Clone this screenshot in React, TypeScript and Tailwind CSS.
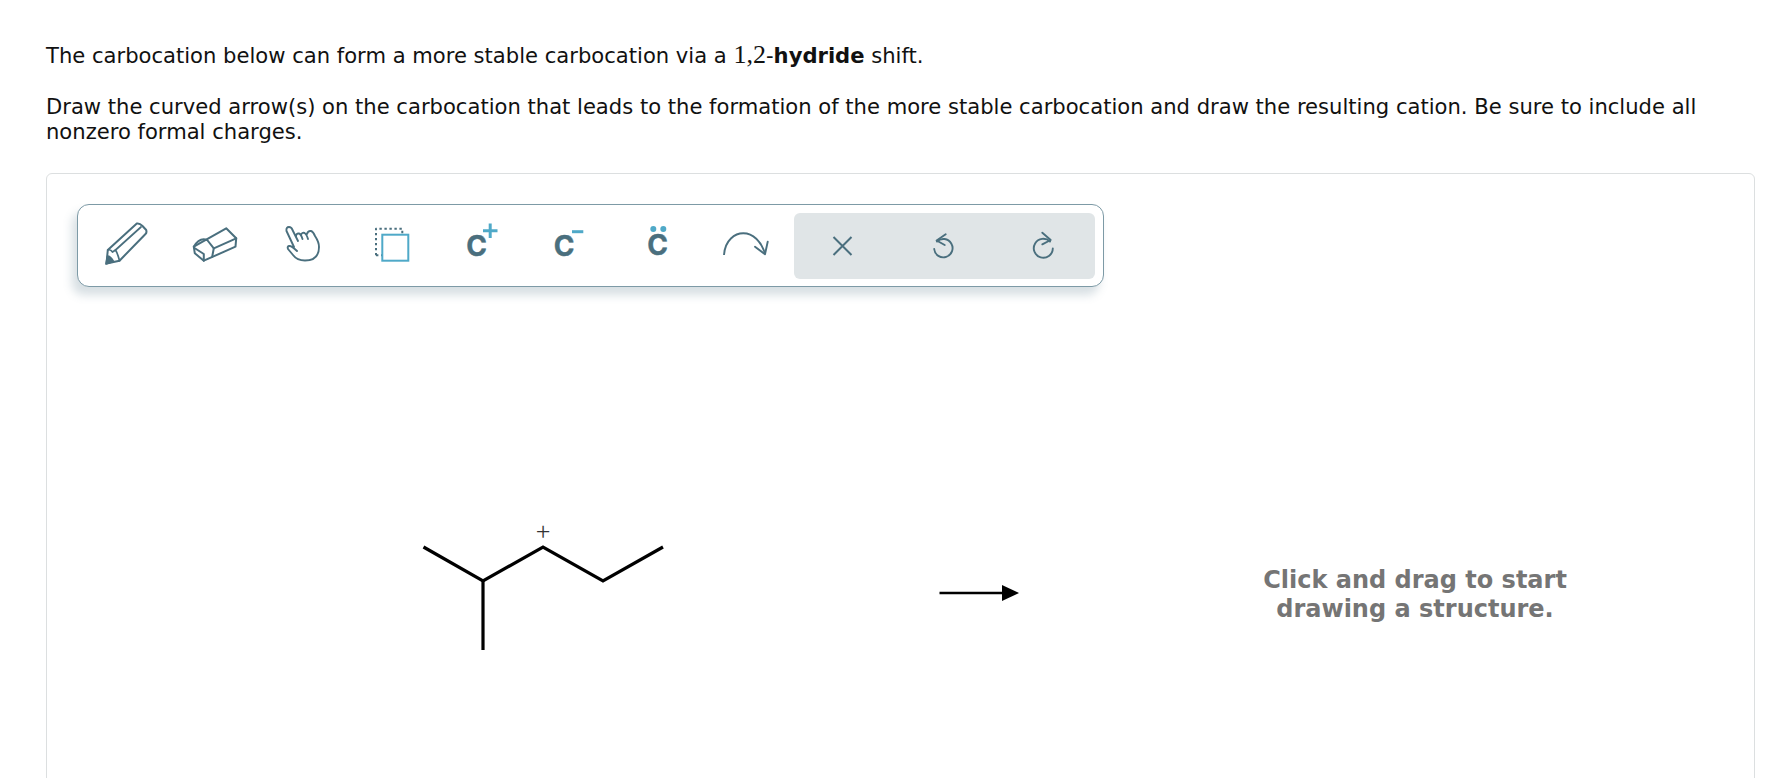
import React from "react";

const ink = "#4a6f7e";
const blue = "#4fa9c8";

function ToolIcon({ children }: { children: React.ReactNode }) {
  return (
    <svg width="48" height="48" viewBox="0 0 48 48" fill="none" stroke={ink} strokeWidth="1.7" strokeLinejoin="round" strokeLinecap="round" className="overflow-visible">
      {children}
    </svg>
  );
}

function CarbonLetter() {
  return (
    <text x="0" y="0" fill={ink} stroke={ink} strokeWidth="0.4" fontFamily="Inter, sans-serif" fontWeight="700" fontSize="28" textAnchor="middle">
      C
    </text>
  );
}

const tools = [
  <ToolIcon key="pencil">
    <g transform="translate(1.5 0)">
      <path d="M5.3 28 L34.3 1.6 Q37 1 40 4 L43.7 8 Q44.5 10.5 43 12 L17 38.7 L4 41.5 Z" strokeWidth="2" />
      <path d="M5.3 28 Q8 27 10 30 L13 28 Q15 31 17 38.7" />
      <path d="M13 28 L38.5 5" />
      <path d="M3.5 42 L5 34 Q8 34 11 39.5 Z" fill={ink} />
    </g>
  </ToolIcon>,
  <ToolIcon key="eraser">
    <g transform="translate(1.5 0)">
      <path d="M2.3 24.7 L34.7 6.3 L44.7 16.3 L44 24.7 L12.3 38.7 L3.3 31.3 Z" strokeWidth="2" />
      <path d="M15.7 18 L22.3 26.3 L44.7 16.3" strokeWidth="2" />
      <path d="M2.3 24.7 Q8 15 15.7 18" strokeWidth="2" />
      <path d="M22.3 26.3 L20.7 34.7" strokeWidth="2" />
      <path d="M3 26 L12.3 32 L12.3 38.7" strokeWidth="2" />
    </g>
  </ToolIcon>,
  <ToolIcon key="hand">
    <path
      d="M15 25 L7.5 9 Q7 5 10 5 Q12.5 5 13.5 8 L19 19 M17 15 Q17 11 20 11.5 Q22 12 23.5 17 M22 13 Q23 10 25.5 11 Q27.5 12 29 17 M28 12 Q29 8.5 32 9 Q34 9.5 36 14 Q40 20 40 25 Q40 38.5 26 38.5 Q18 38.5 14 33 L9 27 Q8 24.5 10 24 Q12.5 23.5 18 29"
      strokeWidth="1.9"
    />
  </ToolIcon>,
  <ToolIcon key="select">
    <g transform="translate(1 0)">
      <path d="M7 33.3 L7 6.7 L33.3 6.7 L33.3 12 M7 33.3 L13 33.3" strokeDasharray="2.4 2.6" strokeLinecap="butt" strokeWidth="2" />
      <rect x="13.3" y="12.7" width="26" height="26" stroke={blue} strokeWidth="2" strokeLinejoin="miter" />
    </g>
  </ToolIcon>,
  <ToolIcon key="cation">
    <g transform="translate(19.5 33.5)">
      <CarbonLetter />
    </g>
    <path d="M33.2 1.5 L33.2 16 M26 8.7 L40.5 8.7" stroke={blue} strokeWidth="3" strokeLinecap="butt" />
  </ToolIcon>,
  <ToolIcon key="anion">
    <g transform="translate(18 33.5)">
      <CarbonLetter />
    </g>
    <path d="M26 9.7 L37.3 9.7" stroke={blue} strokeWidth="3" strokeLinecap="butt" />
  </ToolIcon>,
  <ToolIcon key="lone-pair">
    <g transform="translate(22.5 32.5)">
      <CarbonLetter />
    </g>
    <circle cx="18.3" cy="7" r="3" fill={blue} stroke="none" />
    <circle cx="28.3" cy="7" r="3" fill={blue} stroke="none" />
  </ToolIcon>,
  <ToolIcon key="arrow">
    <g transform="translate(-3 0)">
      <path d="M3 33 C4 18 14 11.3 22.3 11.3 C32 11.3 40 19 44 31.5" strokeWidth="1.9" strokeLinecap="butt" />
      <path d="M46.7 19.7 L44 32.3 L34 24.7" strokeWidth="1.9" />
    </g>
  </ToolIcon>,
];

const actions = [
  <ToolIcon key="clear">
    <g transform="translate(-1.5 0)">
      <path d="M15 15 L33 33 M33 15 L15 33" strokeWidth="2" strokeLinecap="butt" />
    </g>
  </ToolIcon>,
  <ToolIcon key="undo">
    <path d="M17 19.5 A9.2 9.2 0 1 1 14.2 27" strokeWidth="1.9" />
    <path d="M25.7 12.3 L16.6 18.5 L24.7 23" strokeWidth="1.9" />
  </ToolIcon>,
  <ToolIcon key="redo">
    <g transform="translate(-2 0)">
      <path d="M31 19.5 A9.5 9.5 0 1 0 33.8 26.5" strokeWidth="1.9" />
      <path d="M23.3 10.7 L31.7 18 L23.3 22.3" strokeWidth="1.9" />
    </g>
  </ToolIcon>,
];

export default function App() {
  return (
    <div className="h-screen overflow-hidden bg-white pt-[42px] pl-[46px] pr-[11px] font-['DejaVu_Sans',sans-serif] text-[21.1px] leading-[25px] text-[#111]">
      <p className="mb-[26px]">
        The carbocation below can form a more stable carbocation via a{" "}
        <span className="font-['Liberation_Serif',serif] text-[26px]">1,2</span>-<b>hydride</b> shift.
      </p>
      <p className="mb-[29px] max-w-[1670px]">
        Draw the curved arrow(s) on the carbocation that leads to the formation of the more stable carbocation and draw the resulting cation. Be sure to include all nonzero formal charges.
      </p>

      <div className="h-[700px] rounded-t-[6px] border border-[#dcdfe0] pt-[30px]">
        <div className="ml-[30px] flex h-[83px] w-[1027px] items-center justify-between rounded-[12px] border border-[#7d9aa6] bg-white pr-[8px] pl-[2.5px] shadow-[-5px_8px_10px_rgba(74,111,126,0.22)]">
          <div className="flex">
            {tools.map((icon, i) => (
              <div key={i} className="flex h-[65px] w-[89px] items-center justify-center">
                {icon}
              </div>
            ))}
          </div>
          <div className="flex h-[66px] w-[301px] rounded-[6px] bg-[#e0e5e7]">
            {actions.map((icon, i) => (
              <div key={i} className="flex flex-1 items-center justify-center">
                {icon}
              </div>
            ))}
          </div>
        </div>

        <div className="flex items-start pl-[373px]">
          <svg width="246" height="170" viewBox="420 490 246 170" className="mt-[203px] shrink-0" fill="none" stroke="#000" strokeWidth="3.2">
            <path d="M423.5 547 L483 581 L543 547 L603 581 L663 547" />
            <path d="M483 581 L483 650" />
            <text x="543" y="539.5" fill="#333" stroke="none" fontFamily="'Liberation Serif', serif" fontSize="26" textAnchor="middle">+</text>
          </svg>
          <svg width="90" height="20" viewBox="0 0 90 20" className="mt-[296px] ml-[269px] shrink-0">
            <path d="M4.5 10 L68 10" stroke="#000" strokeWidth="2.5" />
            <path d="M67 2 L84 10 L67 18 Z" fill="#000" />
          </svg>
          <div className="mt-[279px] ml-[220px] w-[340px] shrink-0 text-center text-[24px] leading-[29px] font-bold text-[#757575]">
            Click and drag to start drawing a structure.
          </div>
        </div>
      </div>
    </div>
  );
}
